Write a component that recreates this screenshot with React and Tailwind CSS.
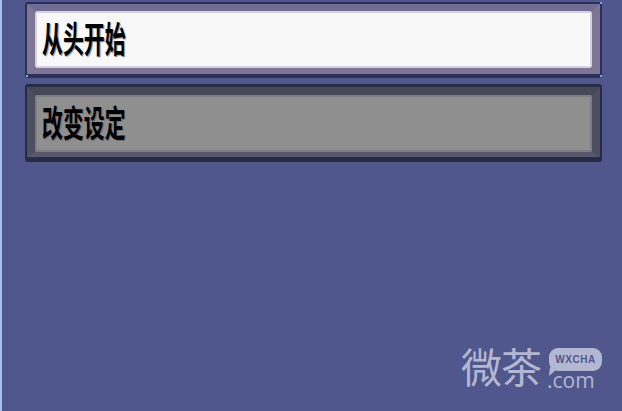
function Corner({ className }) {
  return <div className={`absolute h-[2px] w-[2px] bg-[#8f9be0] ${className}`} />
}

function MenuButton({ label, dimmed }) {
  return (
    <div className={`relative rounded-[3px] ${dimmed ? 'border-x-2 border-t-[3px] border-b-[5px] border-[#262b48]' : 'mt-[2px] border-x-2 border-t-2 border-b-[4px] border-[#2b3059]'}`}>
      <div className={`border-x-[8px] ${dimmed ? 'border-t-[8px] border-b-[5px] border-t-[#47475a] border-b-[#59596b] border-x-[#4e4e60]' : 'border-t-[7px] border-b-[6px] border-t-[#736c96] border-b-[#7d7699] border-x-[#7d7694]'}`}>
        <div className={`flex h-[57px] items-center overflow-hidden rounded-[2px] border-2 pl-[5px] pb-[5px] ${dimmed ? 'border-[#7d7d85] bg-[#8f8f8f]' : 'border-[#d4d2de] bg-[#f8f8f9]'}`}>
          <span
            className="origin-left scale-x-[0.58] whitespace-nowrap text-[36px] leading-none font-bold text-black"
            style={{ fontFamily: '"Noto Sans CJK SC", sans-serif', textShadow: '2px 1px 0 rgba(90,90,90,0.55)' }}
          >
            {label}
          </span>
        </div>
      </div>
      {!dimmed && <Corner className="-left-[1px] -bottom-[3px]" />}
      {!dimmed && <Corner className="-right-[2px] -bottom-[3px]" />}
      {!dimmed && <Corner className="-right-[2px] -top-[2px]" />}
    </div>
  )
}

export default function App() {
  return (
    <div className="relative flex h-[411px] w-[622px] overflow-hidden bg-[#50578d]">
      <div className="w-[2px] shrink-0 bg-[#9fc3ee]" />
      <div className="flex flex-1 flex-col gap-[6px] pl-[23px] pr-[20px]">
        <MenuButton label="从头开始" />
        <MenuButton label="改变设定" dimmed />
      </div>

      <div className="absolute left-[461px] top-[348px] flex items-start gap-[8px] text-[#b4b7d2]">
        <span
          className="-mt-[3px] text-[41px] leading-none font-normal tracking-[-1px]"
          style={{ fontFamily: '"Noto Sans CJK SC", sans-serif' }}
        >
          微茶
        </span>
        <div className="flex flex-col items-start">
          <div className="relative flex h-[23px] w-[53px] items-center justify-center rounded-[9px] bg-[#b4b7d2]">
            <span
              className="text-[10px] leading-none font-bold tracking-[0.5px] text-[#50578d]"
              style={{ fontFamily: '"Liberation Sans", sans-serif' }}
            >
              WXCHA
            </span>
            <svg className="absolute left-[0px] top-[19px]" width="8" height="9" viewBox="0 0 8 9">
              <path d="M1 0 L8 2 L0 9 Z" fill="#b4b7d2" />
            </svg>
          </div>
          <span
            className="-mt-[1px] -ml-[2px] text-[21px] leading-none"
            style={{ fontFamily: '"Open Sans", sans-serif' }}
          >
            .com
          </span>
        </div>
      </div>
    </div>
  )
}
